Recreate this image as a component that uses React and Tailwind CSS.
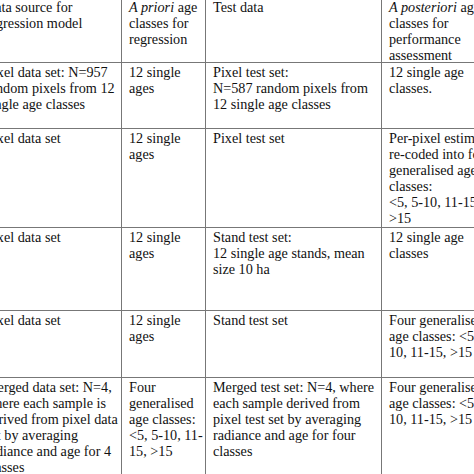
const rows = [
  {
    h: 'h-[65px]',
    cells: [
      ['Data source for', 'regression model'],
      [<><i>A priori</i> age</>, 'classes for', 'regression'],
      ['Test data'],
      [<><i>A posteriori</i> age</>, 'classes for', 'performance', 'assessment'],
    ],
  },
  {
    h: 'h-[66px]',
    cells: [
      ['Pixel data set: N=957', 'random pixels from 12', 'single age classes'],
      ['12 single', 'ages'],
      ['Pixel test set:', 'N=587 random pixels from', '12 single age classes'],
      ['12 single age', 'classes.'],
    ],
  },
  {
    h: 'h-[99px]',
    cells: [
      ['Pixel data set'],
      ['12 single', 'ages'],
      ['Pixel test set'],
      ['Per-pixel estimates', 're-coded into four', 'generalised age', 'classes:', '<5, 5-10, 11-15,', '>15'],
    ],
  },
  {
    h: 'h-[83px]',
    cells: [
      ['Pixel data set'],
      ['12 single', 'ages'],
      ['Stand test set:', '12 single age stands, mean', 'size 10 ha'],
      ['12 single age', 'classes'],
    ],
  },
  {
    h: 'h-[67px]',
    cells: [
      ['Pixel data set'],
      ['12 single', 'ages'],
      ['Stand test set'],
      ['Four generalised', 'age classes: <5-', '10, 11-15, >15'],
    ],
  },
  {
    h: 'h-[120px]',
    cells: [
      ['Merged data set: N=4,', 'where each sample is', 'derived from pixel data', 'set by averaging', 'radiance and age for 4', 'classes'],
      ['Four', 'generalised', 'age classes:', '<5, 5-10, 11-', '15, >15'],
      ['Merged test set: N=4, where', 'each sample derived from', 'pixel test set by averaging', 'radiance and age for four', 'classes'],
      ['Four generalised', 'age classes: <5-', '10, 11-15, >15'],
    ],
  },
];

const widths = ['w-[144px]', 'w-[84px]', 'w-[176px]', 'w-[180px]'];

export default function App() {
  return (
    <div className="w-[474px] h-[474px] overflow-hidden bg-white">
      <div
        className="-ml-[23px] -mt-[3px] w-[600px] text-[14.2px] leading-[16px] text-[#111]"
        style={{ fontFamily: '"Liberation Serif", "Times New Roman", serif' }}
      >
        {rows.map((row, i) => (
          <div key={i} className={`flex ${row.h}`}>
            {row.cells.map((lines, j) => (
              <div
                key={j}
                className={`${widths[j]} shrink-0 border-t border-l border-[#777] pl-[7px] pt-px whitespace-nowrap overflow-hidden`}
              >
                {lines.map((l, k) => (
                  <div key={k}>{l}</div>
                ))}
              </div>
            ))}
          </div>
        ))}
      </div>
    </div>
  );
}
